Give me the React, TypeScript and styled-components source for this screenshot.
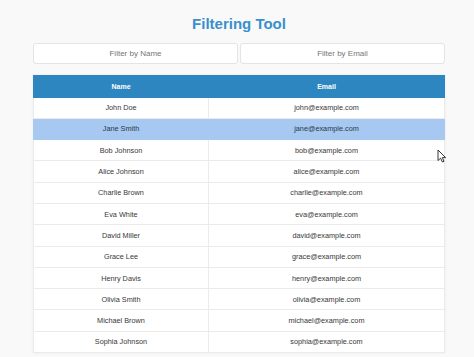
import React, { useState } from "react";
import styled, { createGlobalStyle } from "styled-components";

const Global = createGlobalStyle`
  html, body { margin: 0; padding: 0; background: #f9f9f9; }
  body { font-family: "Liberation Sans", Arial, sans-serif; overflow: hidden; }
`;

const Page = styled.div`
  padding: 15px 0 0 33px;
  position: relative;
  height: 357px;
  box-sizing: border-box;
`;

const Container = styled.div`
  width: 412px;
`;

const Title = styled.h1`
  margin: 0;
  text-align: center;
  font-size: 15px;
  line-height: 18px;
  font-weight: 700;
  color: #3a8fce;
`;

const Filters = styled.div`
  display: flex;
  gap: 2px;
  margin-top: 10px;
`;

const FilterInput = styled.input`
  flex: 1;
  min-width: 0;
  height: 21px;
  box-sizing: border-box;
  border: 1px solid #e4e4e4;
  border-radius: 3px;
  background: #ffffff;
  text-align: center;
  font-family: "Liberation Sans", Arial, sans-serif;
  font-size: 8px;
  color: #333;
  padding: 0;
  outline: none;
  &::placeholder { color: #767676; }
`;

const Table = styled.table`
  margin-top: 11px;
  width: 412px;
  border-collapse: collapse;
  background: #ffffff;
  box-shadow: 0 0 3px rgba(0, 0, 0, 0.06);
  table-layout: fixed;
`;

const HeadRow = styled.tr`
  height: 21.5px;
`;

const HeadCell = styled.th<{ $w?: number }>`
  background: #2e86c1;
  color: #ffffff;
  font-size: 7px;
  font-weight: 700;
  padding: 0;
  border: 1px solid #2e86c1;
  border-left-color: #5fa3d2;
  &:first-child { border-left-color: #2e86c1; }
  ${(p) => (p.$w ? `width: ${p.$w}px;` : "")}
`;

const Row = styled.tr<{ $active?: boolean }>`
  height: 21.3px;
  background: ${(p) => (p.$active ? "#a6c8f1" : "#ffffff")};
`;

const Cell = styled.td<{ $active?: boolean }>`
  padding: 0;
  text-align: center;
  font-size: 7.3px;
  color: ${(p) => (p.$active ? "#2a3948" : "#383838")};
  border: 1px solid ${(p) => (p.$active ? "#a6c8f1" : "#ebebeb")};
  border-top: none;
`;

const Cursor = styled.svg`
  position: absolute;
  left: 437px;
  top: 149px;
`;

const people = [
  ["John Doe", "john@example.com"],
  ["Jane Smith", "jane@example.com"],
  ["Bob Johnson", "bob@example.com"],
  ["Alice Johnson", "alice@example.com"],
  ["Charlie Brown", "charlie@example.com"],
  ["Eva White", "eva@example.com"],
  ["David Miller", "david@example.com"],
  ["Grace Lee", "grace@example.com"],
  ["Henry Davis", "henry@example.com"],
  ["Olivia Smith", "olivia@example.com"],
  ["Michael Brown", "michael@example.com"],
  ["Sophia Johnson", "sophia@example.com"],
];

export default function App() {
  const [name, setName] = useState("");
  const [email, setEmail] = useState("");
  const rows = people.filter(
    ([n, e]) =>
      n.toLowerCase().includes(name.toLowerCase()) &&
      e.toLowerCase().includes(email.toLowerCase())
  );
  return (
    <>
      <Global />
      <Page>
        <Container>
          <Title>Filtering Tool</Title>
          <Filters>
            <FilterInput
              placeholder="Filter by Name"
              value={name}
              onChange={(e) => setName(e.target.value)}
            />
            <FilterInput
              placeholder="Filter by Email"
              value={email}
              onChange={(e) => setEmail(e.target.value)}
            />
          </Filters>
          <Table>
            <thead>
              <HeadRow>
                <HeadCell $w={174}>Name</HeadCell>
                <HeadCell>Email</HeadCell>
              </HeadRow>
            </thead>
            <tbody>
              {rows.map(([n, e]) => {
                const active = n === "Jane Smith";
                return (
                  <Row key={n} $active={active}>
                    <Cell $active={active}>{n}</Cell>
                    <Cell $active={active}>{e}</Cell>
                  </Row>
                );
              })}
            </tbody>
          </Table>
        </Container>
        <Cursor width="10" height="14" viewBox="0 0 10 14">
          <path
            d="M1 1 L1 11.5 L3.6 9.2 L5.4 13 L7 12.3 L5.3 8.6 L8.6 8.6 Z"
            fill="#ffffff"
            stroke="#222"
            strokeWidth="0.9"
            strokeLinejoin="round"
          />
        </Cursor>
      </Page>
    </>
  );
}
